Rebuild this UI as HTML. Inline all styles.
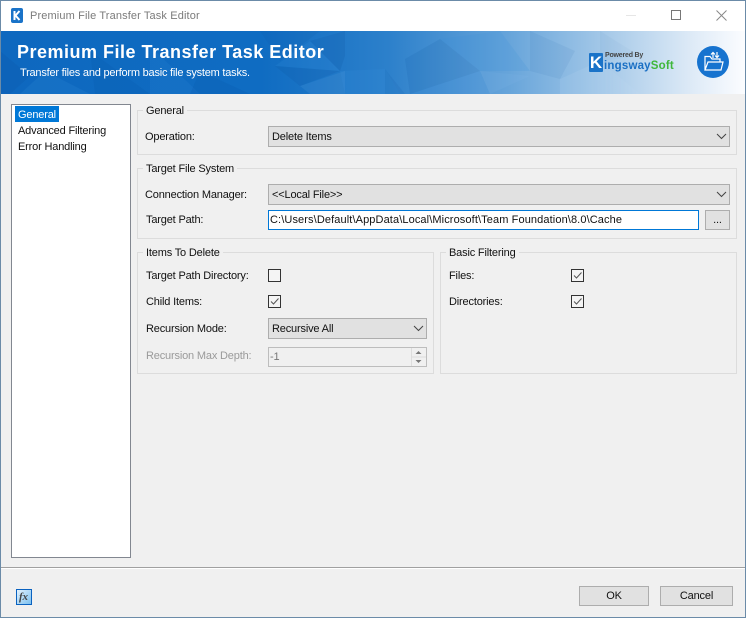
<!DOCTYPE html>
<html><head><meta charset="utf-8"><style>
html,body{margin:0;padding:0;}
body{width:746px;height:618px;overflow:hidden;position:relative;background:#f0f0f0;font-family:"Liberation Sans",sans-serif;font-size:11px;letter-spacing:-.17px;color:#111;}
.t{position:absolute;white-space:nowrap;line-height:14px;}
.b{position:absolute;box-sizing:border-box;}
.grp{position:absolute;box-sizing:border-box;border:1px solid #dcdcdc;}
.leg{position:absolute;background:#f0f0f0;padding:0 3px;white-space:nowrap;line-height:14px;}
.combo{position:absolute;box-sizing:border-box;background:#e1e1e1;border:1px solid #adadad;}
.cb{position:absolute;box-sizing:border-box;width:13px;height:13px;border:1px solid #333;background:#f4f4f4;}
.btn{position:absolute;box-sizing:border-box;background:#e1e1e1;border:1px solid #adadad;text-align:center;}
svg{position:absolute;display:block;}
</style></head><body>
<!-- title bar -->
<div class="b" style="left:0;top:0;width:746px;height:31px;background:#fff;"></div>
<svg style="left:11px;top:8px" width="12" height="15" viewBox="0 0 12 15"><rect width="12" height="15" rx="2" fill="#1a73c8"/><path d="M3.5 3v9M8.500 3L4.500 7.500L8.500 12" fill="none" stroke="#fff" stroke-width="2"/></svg>
<div class="t" style="left:30px;top:9px;color:#7b7b7b;letter-spacing:.13px;">Premium File Transfer Task Editor</div>
<div class="b" style="left:626px;top:15px;width:10px;height:1px;background:#e6e6e6;"></div>
<div class="b" style="left:671px;top:10px;width:10px;height:10px;border:1px solid #777;"></div>
<svg style="left:716px;top:10px" width="11" height="11" viewBox="0 0 11 11"><path d="M.5.5L10.500 10.500M10.500.5L.5 10.500" stroke="#888" fill="none"/></svg>
<!-- banner -->
<svg style="left:0;top:31px" width="746" height="63" viewBox="0 0 746 63">
<defs><linearGradient id="g" x1="0" x2="1" y1="0" y2="0">
<stop offset="0" stop-color="#0e68bf"/><stop offset=".35" stop-color="#0f6cc2"/><stop offset=".52" stop-color="#2c80cb"/><stop offset=".68" stop-color="#66a4da"/><stop offset=".82" stop-color="#a9cbe9"/><stop offset=".93" stop-color="#dfebf7"/><stop offset="1" stop-color="#fcfdff"/></linearGradient>
<linearGradient id="f" x1="0" x2="1" y1="0" y2="0"><stop offset="0" stop-color="#fff"/><stop offset=".8" stop-color="#fff"/><stop offset=".93" stop-color="#000"/></linearGradient>
<mask id="m"><rect width="746" height="63" fill="url(#f)"/></mask></defs>
<rect width="746" height="63" fill="url(#g)"/>
<g mask="url(#m)">
<polygon points="0,20 30,45 10,63 0,63" fill="#0a4f9e" opacity=".18"/>
<polygon points="45,40 90,63 20,63" fill="#3a8fdc" opacity=".18"/>
<polygon points="90,20 150,63 95,63" fill="#0a4f9e" opacity=".15"/>
<polygon points="150,15 200,63 150,63" fill="#3a8fdc" opacity=".15"/>
<polygon points="200,40 250,63 190,63" fill="#0a4f9e" opacity=".15"/>
<polygon points="260,0 320,0 280,30" fill="#0a4f9e" opacity=".1"/>
<polygon points="275,35 310,10 340,40" fill="#3a8fdc" opacity=".18"/>
<polygon points="310,10 345,0 345,25 340,40" fill="#0a4f9e" opacity=".16"/>
<polygon points="275,35 340,40 300,55" fill="#0a4f9e" opacity=".16"/>
<polygon points="340,40 385,38 400,63 345,63" fill="#3a8fdc" opacity=".18"/>
<polygon points="300,55 345,40 345,63 310,63" fill="#7db7ea" opacity=".12"/>
<polygon points="385,38 405,63 385,63" fill="#0a4f9e" opacity=".1"/>
<polygon points="405,28 440,8 480,40 410,63" fill="#0a4f9e" opacity=".12"/>
<polygon points="440,8 500,0 530,40 480,40" fill="#3a8fdc" opacity=".16"/>
<polygon points="410,63 480,40 490,63" fill="#3a8fdc" opacity=".12"/>
<polygon points="480,40 530,45 490,63" fill="#8cc0ee" opacity=".12"/>
<polygon points="530,0 575,20 560,48 530,40" fill="#0a4f9e" opacity=".07"/>
<polygon points="560,48 600,30 640,63 560,63" fill="#dcefff" opacity=".1"/>
<polygon points="600,0 640,25 600,30" fill="#0a4f9e" opacity=".04"/>
</g>
</svg>
<div class="t" style="left:17px;top:41px;font-size:18px;line-height:22px;font-weight:bold;color:#fff;letter-spacing:.5px;">Premium File Transfer Task Editor</div>
<div class="t" style="left:20px;top:66px;color:#fff;letter-spacing:-.22px;">Transfer files and perform basic file system tasks.</div>
<!-- logo -->
<div class="b" style="left:589px;top:53px;width:14px;height:19px;background:#1a73c8;border-radius:1px;"></div>
<div class="t" style="left:589px;top:55px;width:14px;text-align:center;font-size:17px;line-height:15px;font-weight:bold;color:#fff;letter-spacing:0;">K</div>
<div class="t" style="left:605px;top:51px;font-size:7px;line-height:10px;font-weight:bold;color:#444;letter-spacing:-.2px;">Powered By</div>
<div class="t" style="left:604px;top:59px;font-size:11.5px;font-weight:bold;color:#1b70c4;letter-spacing:.2px;">ingsway<span style="color:#3fb73a;">Soft</span></div>
<svg style="left:697px;top:46px" width="32" height="32" viewBox="0 0 32 32"><circle cx="16" cy="16" r="16" fill="#1673cf"/>
<path d="M8 24V10.500h5l2 2.500h8V16M8 24H24L26 16H11L8 24Z" fill="none" stroke="#fff" stroke-width="1.200"/>
<path d="M16 12V6.500M14 8.500l2-2 2 2M20 6V11.500M18 9.500l2 2 2-2" fill="none" stroke="#fff" stroke-width="1.200"/></svg>
<!-- list -->
<div class="b" style="left:11px;top:104px;width:120px;height:454px;background:#fff;border:1px solid #828790;"></div>
<div class="b" style="left:15px;top:106px;width:44px;height:16px;background:#0078d7;"></div>
<div class="t" style="left:18px;top:108px;color:#fff;">General</div>
<div class="t" style="left:18px;top:124px;">Advanced Filtering</div>
<div class="t" style="left:18px;top:140px;">Error Handling</div>
<!-- General -->
<div class="grp" style="left:137px;top:110px;width:600px;height:45px;"></div>
<div class="leg" style="left:143px;top:104px;">General</div>
<div class="t" style="left:145px;top:130px;">Operation:</div>
<div class="combo" style="left:268px;top:126px;width:462px;height:21px;"></div>
<div class="t" style="left:272px;top:130px;">Delete Items</div>
<svg style="left:716px;top:133px" width="11" height="7" viewBox="0 0 11 7"><path d="M1 1l4.500 4.500L10 1" fill="none" stroke="#444"/></svg>
<!-- Target -->
<div class="grp" style="left:137px;top:168px;width:600px;height:71px;"></div>
<div class="leg" style="left:143px;top:162px;">Target File System</div>
<div class="t" style="left:145px;top:188px;">Connection Manager:</div>
<div class="combo" style="left:268px;top:184px;width:462px;height:21px;"></div>
<div class="t" style="left:272px;top:188px;">&lt;&lt;Local File&gt;&gt;</div>
<svg style="left:716px;top:191px" width="11" height="7" viewBox="0 0 11 7"><path d="M1 1l4.500 4.500L10 1" fill="none" stroke="#444"/></svg>
<div class="t" style="left:146px;top:213px;">Target Path:</div>
<div class="b" style="left:268px;top:210px;width:431px;height:20px;background:#fff;border:1px solid #0078d7;"></div>
<div class="t" style="left:270px;top:213px;letter-spacing:.11px;">C:\Users\Default\AppData\Local\Microsoft\Team Foundation\8.0\Cache</div>
<div class="btn" style="left:705px;top:210px;width:25px;height:20px;line-height:18px;">...</div>
<!-- Items -->
<div class="grp" style="left:137px;top:252px;width:297px;height:122px;"></div>
<div class="leg" style="left:143px;top:246px;">Items To Delete</div>
<div class="t" style="left:146px;top:269px;">Target Path Directory:</div>
<div class="cb" style="left:268px;top:269px;"></div>
<div class="t" style="left:146px;top:295px;">Child Items:</div>
<div class="cb" style="left:268px;top:295px;"></div>
<svg style="left:268px;top:295px" width="13" height="13" viewBox="0 0 13 13"><path d="M3 6.500l2.500 2.500L10.500 3.500" fill="none" stroke="#555" stroke-width="1"/></svg>
<div class="t" style="left:146px;top:322px;">Recursion Mode:</div>
<div class="combo" style="left:268px;top:318px;width:159px;height:21px;"></div>
<div class="t" style="left:272px;top:322px;">Recursive All</div>
<svg style="left:413px;top:325px" width="11" height="7" viewBox="0 0 11 7"><path d="M1 1l4.500 4.500L10 1" fill="none" stroke="#444"/></svg>
<div class="t" style="left:146px;top:349px;color:#9a9a9a;">Recursion Max Depth:</div>
<div class="b" style="left:268px;top:347px;width:159px;height:20px;background:#f0f0f0;border:1px solid #bdbdbd;"></div>
<div class="t" style="left:270px;top:350px;color:#777;">-1</div>
<svg style="left:411px;top:348px" width="15" height="18" viewBox="0 0 15 18"><path d="M.5 0V18M.5 9H15" stroke="#ddd" fill="none"/><path d="M4.500 6L7.500 3L10.500 6Z M4.500 12L7.500 15L10.500 12Z" fill="#777"/></svg>
<!-- Basic -->
<div class="grp" style="left:440px;top:252px;width:297px;height:122px;"></div>
<div class="leg" style="left:446px;top:246px;">Basic Filtering</div>
<div class="t" style="left:449px;top:269px;">Files:</div>
<div class="cb" style="left:571px;top:269px;"></div>
<svg style="left:571px;top:269px" width="13" height="13" viewBox="0 0 13 13"><path d="M3 6.500l2.500 2.500L10.500 3.500" fill="none" stroke="#555" stroke-width="1"/></svg>
<div class="t" style="left:449px;top:295px;">Directories:</div>
<div class="cb" style="left:571px;top:295px;"></div>
<svg style="left:571px;top:295px" width="13" height="13" viewBox="0 0 13 13"><path d="M3 6.500l2.500 2.500L10.500 3.500" fill="none" stroke="#555" stroke-width="1"/></svg>
<!-- footer -->
<div class="b" style="left:0;top:567px;width:746px;height:1px;background:#a0a0a0;"></div>
<div class="b" style="left:0;top:568px;width:746px;height:1px;background:#fff;"></div>
<div class="b" style="left:16px;top:589px;width:16px;height:16px;background:linear-gradient(135deg,#e3f2fd,#7cc0ef);border:1px solid #0a62c0;"></div>
<div class="t" style="left:19px;top:590px;font-family:'Liberation Serif',serif;font-style:italic;font-weight:bold;font-size:11px;color:#444;">fx</div>
<div class="btn" style="left:579px;top:586px;width:70px;height:20px;line-height:19px;">OK</div>
<div class="btn" style="left:660px;top:586px;width:73px;height:20px;line-height:19px;">Cancel</div>
<!-- window frame -->
<div class="b" style="left:0;top:0;width:746px;height:1px;background:#6b8ba8;"></div>
<div class="b" style="left:0;top:0;width:1px;height:618px;background:#6b8ba8;"></div>
<div class="b" style="right:0;top:0;width:1px;height:618px;background:#6b8ba8;"></div>
<div class="b" style="left:0;top:617px;width:746px;height:1px;background:#6b8ba8;"></div>
</body></html>
